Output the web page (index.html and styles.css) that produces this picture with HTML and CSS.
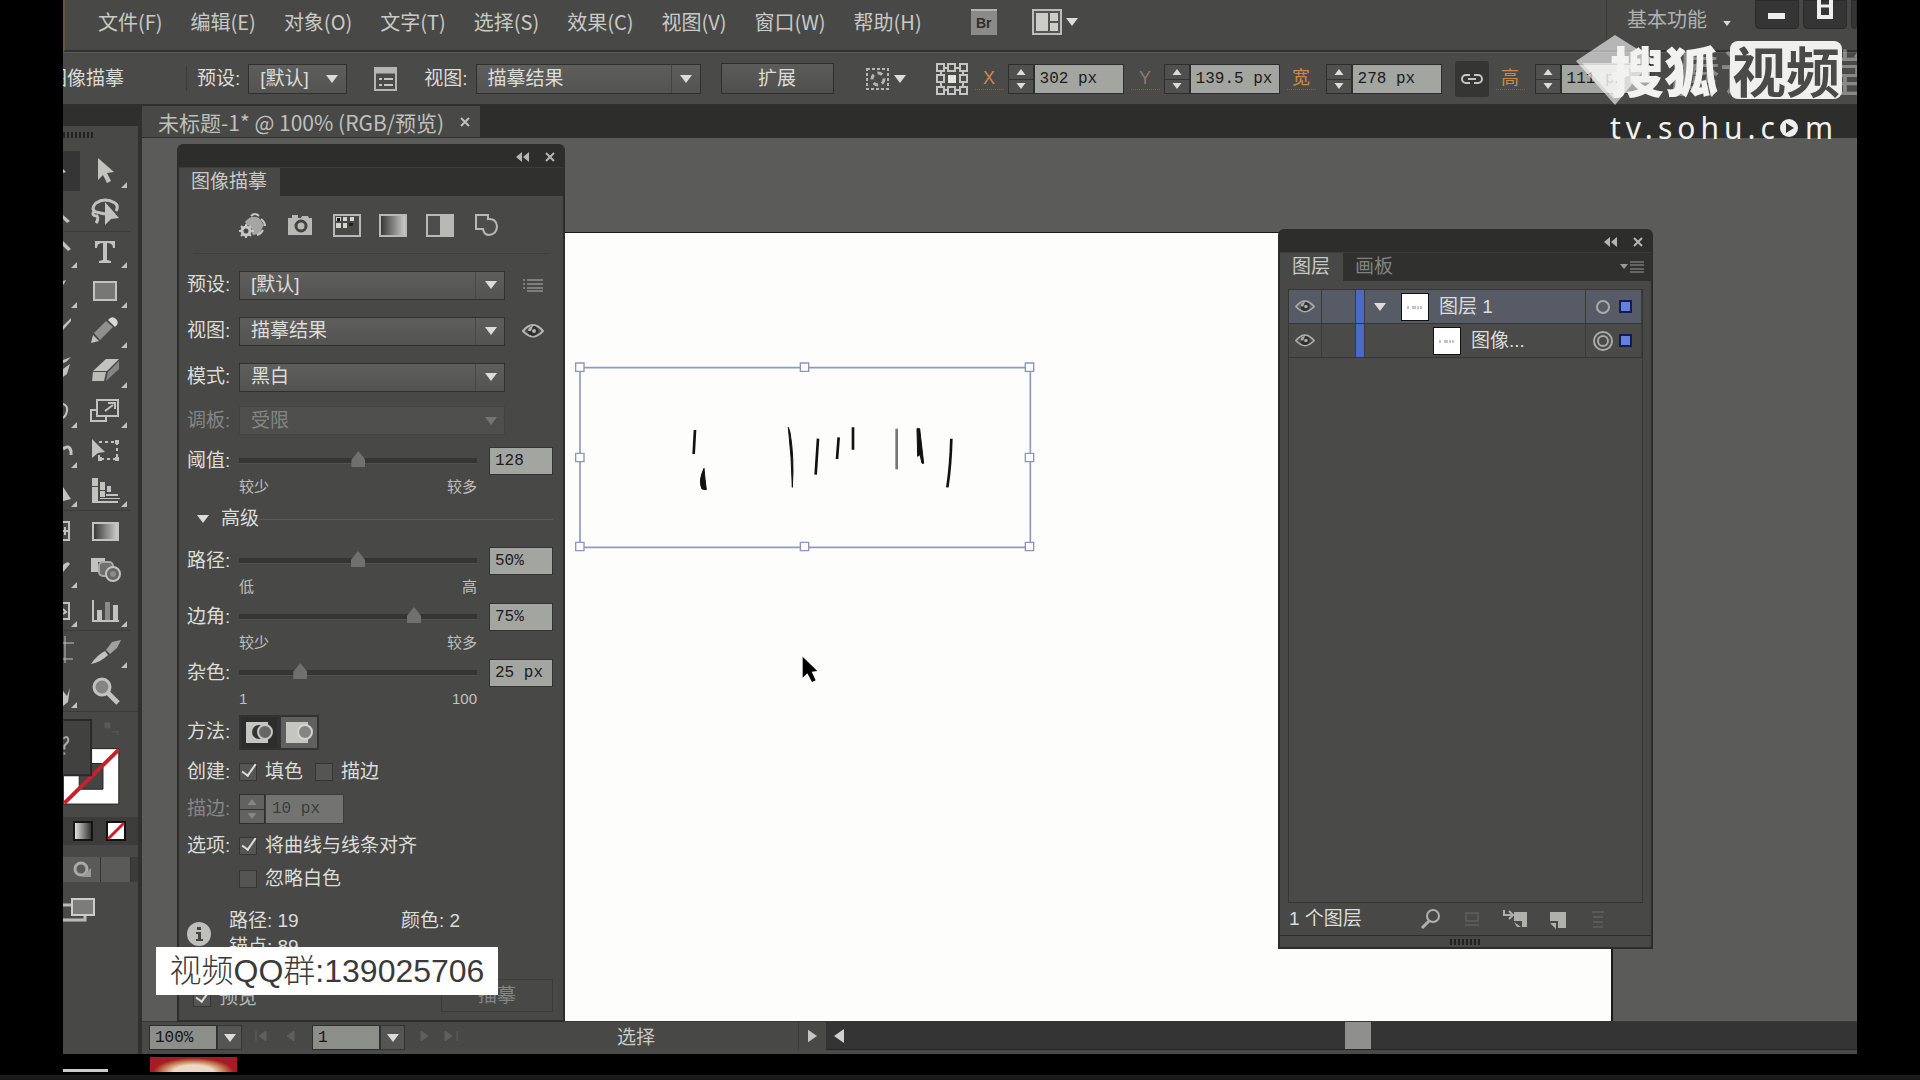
FILE: index.html
```html
<!DOCTYPE html>
<html lang="zh-CN">
<head>
<meta charset="utf-8">
<title>未标题-1* @ 100% (RGB/预览)</title>
<link rel="stylesheet" href="styles.css">
</head>
<body>
<svg class="defs" aria-hidden="true">
  <defs>
    <linearGradient id="ramp"><stop offset="0" stop-color="#333"/><stop offset="1" stop-color="#d0d0cc"/></linearGradient>
    <symbol id="down" viewBox="0 0 12 8"><path d="M0 0h12L6 8z"/></symbol>
    <symbol id="up" viewBox="0 0 12 8"><path d="M0 8h12L6 0z"/></symbol>
    <symbol id="right" viewBox="0 0 10 14"><path d="M0 0v14l10-7z"/></symbol>
    <symbol id="left" viewBox="0 0 10 14"><path d="M10 0v14L0 7z"/></symbol>
    <symbol id="corner" viewBox="0 0 6 6"><path d="M6 0v6H0z"/></symbol>
    <symbol id="collapse" viewBox="0 0 14 10"><path d="M6 0v10L0 5zM13 0v10L7 5z"/></symbol>
    <symbol id="close" viewBox="0 0 10 10"><path d="M1 1l8 8M9 1L1 9" fill="none" stroke="currentColor" stroke-width="2"/></symbol>
    <symbol id="eye" viewBox="0 0 22 16"><path d="M1 8Q11-4 21 8Q11 19 1 8z" fill="none" stroke="currentColor" stroke-width="2"/><circle cx="11" cy="8" r="5" fill="#2f302f"/><path d="M11 3a5 5 0 0 0-5 5h3z"/><circle cx="12" cy="8" r="2"/></symbol>
    <symbol id="sketch" viewBox="0 0 26 26"><path d="M6 12v3M11 12v3M13 12v3M16 12v3M19 12v3" stroke="#888" fill="none"/></symbol>
  </defs>
</svg>

<div class="app">
  <header class="menubar">
    <nav class="menus">
      <button>文件(F)</button><button>编辑(E)</button><button>对象(O)</button><button>文字(T)</button><button>选择(S)</button><button>效果(C)</button><button>视图(V)</button><button>窗口(W)</button><button>帮助(H)</button>
    </nav>
    <button class="bridge" aria-label="Bridge">Br</button>
    <button class="arrange" aria-label="排列文档">
      <svg width="30" height="26" viewBox="0 0 30 26"><rect x="1" y="1" width="28" height="24" fill="#555" stroke="#bcbdb9" stroke-width="2"/><path d="M4 4h12v18H4zM18 4h8v8h-8zM18 14h8v8h-8z" fill="#ccccc8"/></svg>
      <svg class="tri"><use href="#down"/></svg>
    </button>
    <button class="preset-space">基本功能 <svg class="tri tri-small"><use href="#down"/></svg></button>
    <div class="winbtns">
      <button aria-label="最小化"><svg width="20" height="8"><rect x="1" y="1" width="17" height="6" fill="#eee"/></svg></button>
      <button aria-label="还原"><svg width="18" height="20"><path d="M3 0v17h12V0" fill="none" stroke="#eee" stroke-width="4"/><path d="M4 6h10" stroke="#eee" stroke-width="3"/></svg></button>
      <button aria-label="关闭"></button>
    </div>
  </header>

  <div class="optbar">
    <span class="opt-title">图像描摹</span>
    <div class="opt-group">
      <label for="o-preset">预设:</label>
      <span class="pick pick-s"><select id="o-preset"><option>[默认]</option></select><svg class="tri"><use href="#down"/></svg></span>
    </div>
    <button class="plain" aria-label="图像描摹面板"><svg width="23" height="24" viewBox="0 0 23 24"><path d="M1 1h21v22H1z" fill="none" stroke="#b5b6b2" stroke-width="2"/><path d="M1 4h21" stroke="#b5b6b2" stroke-width="5"/><path d="M5 12h3M10 12h9M5 18h3M10 18h9" stroke="#c5c6c2" stroke-width="2"/></svg></button>
    <div class="opt-group">
      <label for="o-view">视图:</label>
      <span class="pick pick-l"><select id="o-view"><option>描摹结果</option></select><svg class="tri"><use href="#down"/></svg></span>
    </div>
    <button class="expand">扩展</button>
    <button class="plain isolate" aria-label="隔离选定的对象"><svg width="24" height="24" viewBox="0 0 24 24"><rect x="1" y="2" width="21" height="20" fill="none" stroke="#b5b6b2" stroke-width="2" stroke-dasharray="3 2"/><circle cx="12" cy="12" r="6" fill="none" stroke="#b5b6b2" stroke-width="3" stroke-dasharray="5 4"/></svg><svg class="tri"><use href="#down"/></svg></button>
    <button class="plain" aria-label="参考点"><svg width="32" height="32" viewBox="0 0 32 32"><g fill="none" stroke="#c5c6c2" stroke-width="2"><path d="M8 5h4M20 5h4M8 27h4M20 27h4M5 8v4M5 20v4M27 8v4M27 20v4"/><path d="M1 1h7v7H1zM12 1h7v7h-7zM24 1h7v7h-7zM1 12h7v7H1zM24 12h7v7h-7zM1 24h7v7H1zM12 24h7v7h-7zM24 24h7v7h-7z"/></g><path d="M12 12h8v8h-8z" fill="#e5e5e0"/></svg></button>
    <div class="measure"><label for="m-x">X</label><span class="spin"><button aria-label="增加"><svg><use href="#up"/></svg></button><button aria-label="减少"><svg><use href="#down"/></svg></button></span><input id="m-x" value="302 px"></div>
    <div class="measure"><label for="m-y" class="dim">Y</label><span class="spin"><button aria-label="增加"><svg><use href="#up"/></svg></button><button aria-label="减少"><svg><use href="#down"/></svg></button></span><input id="m-y" value="139.5 px"></div>
    <div class="measure size"><label for="m-w">宽</label><span class="spin"><button aria-label="增加"><svg><use href="#up"/></svg></button><button aria-label="减少"><svg><use href="#down"/></svg></button></span><input id="m-w" value="278 px"></div>
    <button class="chain" aria-label="约束宽度和高度比例"><svg width="24" height="14" viewBox="0 0 24 14"><path d="M10 3H6a4 4 0 0 0 0 8h4M14 3h4a4 4 0 0 1 0 8h-4M8 7h8" fill="none" stroke="#c5c6c2" stroke-width="2"/></svg></button>
    <div class="measure size"><label for="m-h">高</label><span class="spin"><button aria-label="增加"><svg><use href="#up"/></svg></button><button aria-label="减少"><svg><use href="#down"/></svg></button></span><input id="m-h" value="111 px"></div>
  </div>

  <div class="work">
    <aside class="tools">
      <div class="grip"></div>
      <div class="toolgrid">
        <button class="on"><svg viewBox="0 0 17 40"><path d="M0 18l3 3-3 1z"/></svg></button>
        <button><svg viewBox="0 0 50 40"><path d="M18 7v22l5-5 4 8 4-2-4-8 7-1z"/></svg><svg class="corner"><use href="#corner"/></svg></button>
        <button><svg viewBox="0 0 17 40"><path d="M0 24l7 6-3 2-4-4z"/></svg></button>
        <button><svg viewBox="0 0 50 40"><path d="M36 20q3-5-1-8-10-6-19 0-6 6 0 9l9 2M14 20q-3 5 3 5 2 3-1 7" fill="none" stroke="currentColor" stroke-width="3"/><path d="M25 11l14 16-8 1-6 6z"/></svg></button>
        <button class="cut"><svg viewBox="0 0 17 40"><path d="M0 9l8 8-3 2-5-5z"/></svg><svg class="corner"><use href="#corner"/></svg></button>
        <button class="cut"><svg viewBox="0 0 50 40"><path d="M15 9h20v7h-2q0-5-6-5v17l4 1v2H19v-2l4-1V11q-6 0-6 5h-2z"/></svg><svg class="corner"><use href="#corner"/></svg></button>
        <button><svg viewBox="0 0 17 40"><path d="M0 10l3-1-2 4-1 1z"/></svg><svg class="corner"><use href="#corner"/></svg></button>
        <button><svg viewBox="0 0 50 40"><rect x="14" y="11" width="22" height="18" fill="#777876" stroke="currentColor" stroke-width="2"/></svg><svg class="corner"><use href="#corner"/></svg></button>
        <button><svg viewBox="0 0 17 40"><path d="M0 15l8-8v3l-8 9z"/></svg></button>
        <button><svg viewBox="0 0 50 40"><path d="M11 32l2-8 6 6z"/><path d="M14 22l12-12 7 6-13 13z" fill="#90918e"/><path d="M28 9q4-5 8-1t-1 8z" fill="#d8d8d4"/></svg><svg class="corner"><use href="#corner"/></svg></button>
        <button><svg viewBox="0 0 17 40"><path d="M0 9l8-3-5 5-3 1zM0 18l7-5-3 10-4 3z"/></svg></button>
        <button><svg viewBox="0 0 50 40"><path d="M13 20L26 8h13L27 20z"/><path d="M13 21h13l-2 9H12z" fill="#bbbcb8"/><path d="M28 21L39 10v8L26 30z" fill="#858683"/></svg><svg class="corner"><use href="#corner"/></svg></button>
        <button><svg viewBox="0 0 17 40"><path d="M0 13q5 2 4 7t-4 7" fill="none" stroke="currentColor" stroke-width="2"/></svg><svg class="corner"><use href="#corner"/></svg></button>
        <button><svg viewBox="0 0 50 40"><path d="M17 9h21v16H17zM17 19h-6v11h15v-5" fill="none" stroke="currentColor" stroke-width="2"/><path d="M25 20l8-6M28 12h7v6" fill="none" stroke="currentColor" stroke-width="2"/></svg><svg class="corner"><use href="#corner"/></svg></button>
        <button><svg viewBox="0 0 17 40"><path d="M0 18q6-5 8 2v4" fill="none" stroke="currentColor" stroke-width="3"/></svg><svg class="corner"><use href="#corner"/></svg></button>
        <button><svg viewBox="0 0 50 40"><path d="M12 8l13 13-7 1-6 5z"/><path d="M19 11h18v17H19v-5" fill="none" stroke="currentColor" stroke-width="2" stroke-dasharray="3 3"/><path d="M35 9h4v4h-4zM35 26h4v4h-4zM18 26h4v4h-4z"/></svg></button>
        <button class="cut-b"><svg viewBox="0 0 17 40"><path d="M0 16l8 12-8 2z"/></svg><svg class="corner"><use href="#corner"/></svg></button>
        <button class="cut-b"><svg viewBox="0 0 50 40"><path d="M12 7h6v8h-6zM12 16h6v14h-6zM20 11h5v8h-5zM20 20h5v6h-5zM27 15h4v6h-4zM20 27h20v1H20zM26 23h12v2H26zM12 30h26v2H12z"/></svg><svg class="corner"><use href="#corner"/></svg></button>
        <button><svg viewBox="0 0 17 40"><path d="M0 11h6v18H0M0 20h5M2 16v8" fill="none" stroke="currentColor" stroke-width="2"/></svg></button>
        <button><svg viewBox="0 0 50 40"><rect x="13" y="12" width="25" height="17" fill="url(#ramp)" stroke="currentColor" stroke-width="2"/></svg></button>
        <button><svg viewBox="0 0 17 40"><path d="M0 14q5-5 7-1l-7 8z"/></svg><svg class="corner"><use href="#corner"/></svg></button>
        <button><svg viewBox="0 0 50 40"><path d="M11 7h14v4h-7v10h-7z"/><rect x="19" y="11" width="14" height="14" rx="4" fill="#70716f" stroke="#aaa" stroke-width="2"/><circle cx="33" cy="23" r="7" fill="#666765" stroke="currentColor" stroke-width="2"/><circle cx="33" cy="23" r="3" fill="#8b8c89"/></svg></button>
        <button class="cut-b"><svg viewBox="0 0 17 40"><path d="M0 12h6v16H0M0 18l3 3-3 2" fill="none" stroke="currentColor" stroke-width="2"/></svg><svg class="corner"><use href="#corner"/></svg></button>
        <button class="cut-b"><svg viewBox="0 0 50 40"><path d="M12 9h2v20h25v2H12z"/><path d="M17 19h5v10h-5zM33 14h5v15h-5z"/><path d="M25 11h5v18h-5z" fill="#8b8c89"/></svg><svg class="corner"><use href="#corner"/></svg></button>
        <button><svg viewBox="0 0 17 40"><path d="M2 5v27M0 12h11M0 28h10" fill="none" stroke="currentColor" stroke-width="1"/></svg></button>
        <button><svg viewBox="0 0 50 40"><path d="M11 33q6-9 14-13l3 4q-7 7-17 9z"/><path d="M26 19l6-8 9-2-4 8-7 6z" fill="#a0a19e"/></svg><svg class="corner"><use href="#corner"/></svg></button>
        <button><svg viewBox="0 0 17 40"><path d="M0 20l4 5 3-8-2 14-5 4z"/></svg><svg class="corner"><use href="#corner"/></svg></button>
        <button><svg viewBox="0 0 50 40"><circle cx="22" cy="16" r="8" fill="#858683" stroke="currentColor" stroke-width="3"/><path d="M28 22l10 10" stroke="currentColor" stroke-width="5"/></svg></button>
      </div>
      <svg class="swatches" width="75" height="100" viewBox="0 0 75 100">
        <path d="M0 37h56v56H0z" fill="#fff" stroke="#222"/><path d="M16 52h24v26H16z" fill="#444543" stroke="#222"/><path d="M1 92L56 38" stroke="#c8202c" stroke-width="4"/><path d="M-2 8h30v56H-2z" fill="#41423f" stroke="#2a2b29" stroke-width="2"/><path d="M0 27q4-4 5 1 0 3-4 6v4M0 42h2" fill="none" stroke="#aaa" stroke-width="2"/><path d="M42 11h5v5h-5zM49 20h7M55 20v3" fill="#5a5b59" stroke="#5a5b59"/>
      </svg>
      <div class="modes"><button aria-label="渐变"><i class="m-grad"></i></button><button aria-label="无"><svg width="20" height="20"><path d="M1 1h18v18H1z" fill="#fff" stroke="#111" stroke-width="2"/><path d="M2 18L18 2" stroke="#c8202c" stroke-width="3"/></svg></button></div>
      <div class="modes draw"><button aria-label="背面绘图"><svg width="22" height="20"><circle cx="9" cy="9" r="6" fill="none" stroke="#aaa" stroke-width="3"/><path d="M10 17h9V8z" fill="#999"/></svg></button><button aria-label="内部绘图"></button></div>
      <button class="screen" aria-label="更改屏幕模式"><svg width="34" height="28"><path d="M0 9h8M0 24h22v-5" fill="none" stroke="#bbb" stroke-width="3"/><path d="M9 3h22v16H9z" fill="#7c7d7b" stroke="#ccc" stroke-width="2"/></svg></button>
    </aside>

    <main class="doc">
      <div class="tabs"><div class="tab"><span>未标题-1* @ 100% (RGB/预览)</span><button aria-label="关闭文档"><svg width="10" height="10"><use href="#close"/></svg></button></div></div>
      <div class="canvas">
        <div class="artboard"></div>
        <svg class="art" width="500" height="360" viewBox="0 0 1500 1080">
          <path d="M60 53H1411V592H60z" fill="none" stroke="#8f9ac4" stroke-width="5"/>
          <g fill="#fff" stroke="#8f93c0" stroke-width="4"><path d="M47 39h25v25H47zM721 39h25v25h-25zM1396 39h25v25h-25zM47 310h25v25H47zM1396 310h25v25h-25zM47 577h25v25H47zM721 577h25v25h-25zM1396 577h25v25h-25z"/></g>
          <path d="M405 240L401 312M774 266L767 374M836 262L831 327M879 232V299" stroke="#111" stroke-width="8" fill="none"/>
          <path d="M432 355q-18 38-6 62l13 2q-4-30-7-64zM685 232q10 90 12 180 6-90-7-165zM1071 236l8 0 12 104-5 0-6-26-7 5z" fill="#111" stroke="#111" stroke-width="3"/>
          <path d="M1174 266q-2 80-12 146" stroke="#111" stroke-width="8" fill="none"/>
          <path d="M1010 236V358" stroke="#777" stroke-width="8"/>
          <path d="M728 920V983l14-13 14 26 11-5-12-26 17-2z" fill="#000"/>
        </svg>

        <section class="panel trace">
          <header class="p-head"><button aria-label="折叠"><svg width="14" height="10"><use href="#collapse"/></svg></button><button aria-label="关闭"><svg width="10" height="10"><use href="#close"/></svg></button></header>
          <div class="p-tabs"><span class="p-tab">图像描摹</span></div>
          <div class="quick">
            <button aria-label="自动着色"><svg viewBox="0 0 28 26"><path d="M6 10q6-8 14-4l5 7-5 9-6 1z" fill="#a5a6a2"/><path d="M12 4q4-4 8 0M22 7q4 3 4 7M24 18q-2 4-6 5" fill="none" stroke="#c5c6c2" stroke-width="2"/><circle cx="7" cy="19" r="6" fill="#484947"/><circle cx="7" cy="19" r="4" fill="none" stroke="#c8c9c5" stroke-width="3"/><path d="M7 12v3M7 23v3M0 19h3M11 19h4M2 14l2 2M12 24l-2-2M12 14l-2 2M2 24l2-2" stroke="#c8c9c5" stroke-width="2"/></svg></button>
            <button aria-label="高色"><svg viewBox="0 0 28 26"><path d="M2 6h4V3h6v3h3l1-2h6l1 2h3v17H2z"/><circle cx="15" cy="14" r="5" fill="none" stroke="#444" stroke-width="3"/></svg></button>
            <button aria-label="低色"><svg viewBox="0 0 28 26"><path d="M1 3h26v21H1z" fill="none" stroke="currentColor" stroke-width="2"/><path d="M3 5h5v4H3zM10 5h4v4h-4zM17 5h4v4h-4zM3 11h5v5H3zM10 11h4v5h-4z" fill="#d5d5d0"/><path d="M4 6h3v3H4z" fill="#111"/><path d="M16 11h4v3h-4z" fill="#222"/></svg></button>
            <button aria-label="灰度"><svg viewBox="0 0 28 26"><path d="M1 3h26v21H1z" fill="url(#ramp)" stroke="currentColor" stroke-width="2"/></svg></button>
            <button aria-label="黑白"><svg viewBox="0 0 28 26"><path d="M1 3h26v21H1z" fill="#4d4e4c" stroke="currentColor" stroke-width="2"/><path d="M14 3h12v21H14z"/></svg></button>
            <button aria-label="轮廓"><svg viewBox="0 0 28 26"><path d="M3 3h12v4q8-1 9 7 0 8-8 9-5 0-6-6H3z" fill="#4d4e4c" stroke="currentColor" stroke-width="2"/></svg></button>
          </div>
          <div class="p-body">
            <div class="row"><label for="t-preset">预设:</label><span class="pick"><select id="t-preset"><option>[默认]</option></select><svg class="tri"><use href="#down"/></svg></span><button class="side" aria-label="管理预设"><svg width="20" height="14"><path d="M0 2h2M4 2h16M0 6h2M4 6h16M0 10h2M4 10h16M4 13h16" stroke="currentColor" stroke-width="1"/></svg></button></div>
            <div class="row"><label for="t-view">视图:</label><span class="pick"><select id="t-view"><option>描摹结果</option></select><svg class="tri"><use href="#down"/></svg></span><button class="side" aria-label="查看源图像"><svg width="22" height="16"><use href="#eye"/></svg></button></div>
            <div class="row"><label for="t-mode">模式:</label><span class="pick"><select id="t-mode"><option>黑白</option></select><svg class="tri"><use href="#down"/></svg></span></div>
            <div class="row low off"><label for="t-pal">调板:</label><span class="pick"><select id="t-pal" disabled><option>受限</option></select><svg class="tri"><use href="#down"/></svg></span></div>
            <div class="slide"><label for="s-th">阈值:</label><input type="range" id="s-th" min="0" max="255" value="128"><input class="num" value="128" aria-label="阈值"><div class="ends"><span>较少</span><span>较多</span></div></div>
            <button class="adv"><svg class="tri"><use href="#down"/></svg><span>高级</span></button>
            <div class="slide"><label for="s-pa">路径:</label><input type="range" id="s-pa" value="50"><input class="num" value="50%" aria-label="路径"><div class="ends"><span>低</span><span>高</span></div></div>
            <div class="slide"><label for="s-co">边角:</label><input type="range" id="s-co" value="75"><input class="num" value="75%" aria-label="边角"><div class="ends"><span>较少</span><span>较多</span></div></div>
            <div class="slide"><label for="s-no">杂色:</label><input type="range" id="s-no" min="1" max="100" value="25"><input class="num" value="25 px" aria-label="杂色"><div class="ends"><span>1</span><span>100</span></div></div>
            <div class="row"><span>方法:</span><div class="method"><button class="sel" aria-label="邻接"><svg width="28" height="24"><path d="M1 2h22v21H1z" fill="#c5c6c2"/><circle cx="14" cy="12" r="7" fill="#333"/><circle cx="20" cy="12" r="7" fill="#666" stroke="#c5c6c2" stroke-width="2"/></svg></button><button aria-label="重叠"><svg width="28" height="24"><path d="M1 2h22v21H1z" fill="#c5c6c2"/><circle cx="20" cy="12" r="7" fill="#858683" stroke="#d5d5d0" stroke-width="2"/></svg></button></div></div>
            <div class="row short"><span>创建:</span><div class="checks"><label><input type="checkbox" checked>填色</label><label><input type="checkbox">描边</label></div></div>
            <div class="row low off"><label for="t-st">描边:</label><div class="stroke"><span class="spin"><button disabled aria-label="增加"><svg><use href="#up"/></svg></button><button disabled aria-label="减少"><svg><use href="#down"/></svg></button></span><input id="t-st" value="10 px" disabled></div></div>
            <div class="row short"><span>选项:</span><div class="checks"><label><input type="checkbox" checked>将曲线与线条对齐</label></div></div>
            <div class="row short"><span></span><div class="checks"><label><input type="checkbox">忽略白色</label></div></div>
            <div class="info"><svg width="24" height="24"><circle cx="12" cy="12" r="12" fill="#bfc0bc"/><path d="M10 5h4v3h-4zM9 10h5v7h2v2H9v-2h2v-5H9z" fill="#444"/></svg>
              <div class="stats"><span>路径: 19</span><span>颜色: 2</span><span>锚点: 89</span></div></div>
            <div class="p-foot"><label><input type="checkbox" checked>预览</label><button class="go" disabled>描摹</button></div>
          </div>
        </section>

        <section class="panel layers">
          <header class="p-head"><button aria-label="折叠"><svg width="14" height="10"><use href="#collapse"/></svg></button><button aria-label="关闭"><svg width="10" height="10"><use href="#close"/></svg></button></header>
          <div class="p-tabs"><span class="p-tab">图层</span><span class="p-tab idle">画板</span><button class="p-menu" aria-label="面板菜单"><svg width="24" height="14"><path d="M0 4h8l-4 5z"/><path d="M10 2h14M10 5h14M10 9h14M10 12h14" stroke="currentColor" stroke-width="1"/></svg></button></div>
          <ul class="list">
            <li class="current"><button class="vis" aria-label="切换可视性"><svg width="20" height="15"><use href="#eye"/></svg></button><i class="lock"></i><i class="bar"></i><div class="name"><svg class="tri"><use href="#down"/></svg><svg class="thumb" width="28" height="28"><use href="#sketch"/></svg><span>图层 1</span></div><div class="target"><svg width="20" height="20"><circle cx="10" cy="10" r="6" fill="none" stroke="#aaa" stroke-width="2"/></svg><i class="art-sel"></i></div></li>
            <li><button class="vis" aria-label="切换可视性"><svg width="20" height="15"><use href="#eye"/></svg></button><i class="lock"></i><i class="bar"></i><div class="name child"><svg class="thumb" width="28" height="28"><use href="#sketch"/></svg><span>图像...</span></div><div class="target"><svg width="20" height="20"><circle cx="10" cy="10" r="9" fill="none" stroke="#aaa" stroke-width="2"/><circle cx="10" cy="10" r="5" fill="none" stroke="#aaa" stroke-width="2"/></svg><i class="art-sel"></i></div></li>
          </ul>
          <footer class="l-foot"><span>1 个图层</span>
            <div class="l-tools">
            <button aria-label="定位对象"><svg width="22" height="22"><circle cx="13" cy="8" r="6" fill="none" stroke="currentColor" stroke-width="2"/><path d="M9 13l-7 7" stroke="currentColor" stroke-width="3"/></svg></button>
            <button class="faint" aria-label="剪切蒙版"><svg width="22" height="22"><path d="M5 5h12v8H5zM4 17h14" fill="none" stroke="currentColor" stroke-width="2"/></svg></button>
            <button aria-label="新建子图层"><svg width="26" height="22"><path d="M2 2v5h7M7 3l4 4-4 4" fill="none" stroke="currentColor" stroke-width="2"/><path d="M12 4h13v15h-5v-6h-8zM12 14l7 5h-4z"/></svg></button>
            <button aria-label="新建图层"><svg width="22" height="22"><path d="M3 4h16v16h-8v-7H3zM3 15h6v6z"/></svg></button>
            <button class="faint" aria-label="删除"><svg width="22" height="22"><path d="M4 4h12M5 9h10M5 14h10M5 19h10" stroke="currentColor" stroke-width="2"/></svg></button>
            </div>
          </footer>
          <div class="l-grip"></div>
        </section>
      </div>

      <div class="status">
        <div class="combo"><input value="100%" aria-label="缩放"><button aria-label="缩放级别"><svg class="tri"><use href="#down"/></svg></button></div>
        <div class="step"><svg width="44" height="14" viewBox="0 0 44 14"><path d="M2 2v10M12 2L5 7l7 5zM40 2l-7 5 7 5z" stroke="currentColor"/></svg></div>
        <div class="combo"><input value="1" aria-label="画板"><button aria-label="画板导航"><svg class="tri"><use href="#down"/></svg></button></div>
        <div class="step"><svg width="44" height="14" viewBox="0 0 44 14"><path d="M4 2l7 5-7 5zM28 2l7 5-7 5zM40 2v10" stroke="currentColor"/></svg></div>
        <span class="tool-name">选择</span>
        <button class="more" aria-label="状态菜单"><svg width="9" height="14"><use href="#right"/></svg></button>
        <div class="scroll"><svg width="10" height="14"><use href="#left"/></svg><i class="s-thumb"></i></div>
      </div>
    </main>
  </div>
</div>
<div class="taskbar"><i class="line"></i><i class="task-icon"></i></div>

<div class="group-note">视频QQ群:139025706</div>
<div class="ghost">腾讯课堂</div>
<div class="sohu"><svg class="gem" width="78" height="70" viewBox="0 0 78 70"><path d="M0 26L39 0l38 24-38 46z" fill="#fff" fill-opacity=".6"/><path d="M6 28h50L38 64z" fill="#fff" fill-opacity=".5"/></svg>
  <div class="brand"><span>搜狐</span><span class="plate">视频</span></div>
  <div class="url"><span>tv.sohu.c</span><svg width="18" height="18" viewBox="0 0 18 18"><circle cx="9" cy="9" r="9" fill="#eee"/><path d="M6 4v10l8-5z" fill="#333"/></svg><span>m</span></div>
</div>
</body>
</html>
```
FILE: styles.css
```css
* { box-sizing: border-box; }
body {
  margin: 0; background: #000; min-height: 100vh; display: flex; flex-direction: column;
  font-family: "Liberation Sans", "Noto Sans CJK SC", sans-serif; font-size: 19px; line-height: 24px; color: #dcddd9;
  position: relative; overflow: hidden;
}
button, input, select { font: inherit; color: inherit; margin: 0; padding: 0; border: 0; background: none; border-radius: 0; }
button { display: flex; align-items: center; justify-content: center; }
svg { fill: currentColor; flex: none; display: block; }
label, span, button { white-space: nowrap; }
ul { list-style: none; margin: 0; padding: 0; }
i { display: block; }
.defs { position: absolute; width: 0; height: 0; }
.tri { width: 12px; height: 8px; color: #dcdcd8; }
.tri-small { width: 8px; height: 5px; }

.app { flex: 1; margin: 0 63px; display: flex; flex-direction: column; background: #4a4b49; overflow: hidden; position: relative; }

.menubar { height: 52px; display: flex; align-items: flex-start; background: #484947; border-bottom: 2px solid #2f302f; font-family: "Noto Sans CJK SC", sans-serif; font-size: 20px; color: #c9cac6; border-left: 2px solid #6b5638; }
.menus { display: flex; gap: 28px; padding: 10px 0 0 33px; margin-right: 24px; }
.bridge { margin: 9px 0 0 25px; width: 26px; height: 26px; background: #8a8b88; color: #2d2e2d; font: bold 14px/26px "Liberation Sans", sans-serif; border-top: 2px solid #b5b6b2; }
.arrange { margin: 9px 0 0 35px; gap: 4px; }
.preset-space { margin: 0 0 0 auto; padding: 7px 0 0 20px; gap: 16px; color: #b0b1ad; border-left: 1px solid #3a3b39; height: 40px; align-items: flex-start; }
.preset-space svg { align-self: center; }
.winbtns { display: flex; gap: 4px; margin-left: 24px; }
.winbtns button { width: 44px; height: 29px; background: #343534; border: 1px solid #2a2b2a; border-radius: 0 0 4px 4px; align-items: flex-end; padding-bottom: 8px; }
.winbtns button:last-child { width: 6px; }

.optbar { height: 54px; display: flex; align-items: center; border-top: 1px solid #595a58; border-bottom: 2px solid #30312f; overflow: hidden; }
.opt-title { margin-left: -15px; padding-right: 62px; border-right: 1px solid #3a3b39; }
.opt-group { display: flex; align-items: center; gap: 8px; margin: 0 27px 0 10px; }
.plain { gap: 4px; color: #b5b6b2; }
.plain + .opt-group { margin: 0 20px 0 27px; }
.pick { display: flex; align-items: center; position: relative; height: 30px; border: 1px solid #30312f; background: linear-gradient(#5e5f5d, #535452); }
.pick select { appearance: none; width: 100%; height: 100%; padding: 0 34px 0 11px; }
.pick .tri { position: absolute; right: 8px; pointer-events: none; }
.pick-s { width: 99px; }
.pick-s select { padding-right: 20px; }
.pick-l { width: 225px; }
.pick-l::after { content: ""; position: absolute; right: 28px; height: 100%; border-left: 1px solid #444; }
.expand { width: 113px; height: 31px; border: 1px solid #2d2e2d; background: linear-gradient(#5b5c5a, #4f504e); margin-right: 32px; }
.isolate { margin-right: 30px; }
.measure { display: flex; align-items: center; margin-left: 7px; height: 30px; }
.measure label { width: 29px; text-align: center; color: #c98a4a; border-bottom: 1px dotted #8a6038; font-size: 18px; line-height: 22px; margin-right: 4px; }
.measure .dim { color: #8d7c70; }
.size label { margin-right: 10px; }
.spin { width: 26px; height: 30px; display: grid; grid-template-rows: 1fr 1fr; border: 1px solid #2d2e2d; background: #50514f; }
.spin button + button { border-top: 1px solid #333; }
.spin svg { width: 10px; height: 6px; }
.measure input { width: 90px; height: 30px; background: #a3a5a1; color: #1c1c1c; border: 1px solid #2d2e2d; padding-left: 5px; font: 16px/28px "Liberation Mono", monospace; }
.chain { width: 34px; height: 36px; margin-left: 13px; background: #353634; border-radius: 3px; }

.work { flex: 1; display: grid; grid-template-columns: 79px minmax(0, 1fr); }
.tools { border-top: 20px solid #2f302e; border-right: 4px solid #30312f; background: #484947; color: #c2c3bf; }
.grip { height: 6px; width: 32px; margin: 6px 0 13px; background: repeating-linear-gradient(90deg, #222 0 2px, #484947 2px 4px); }
.toolgrid { display: grid; grid-template-columns: 17px 50px; grid-auto-rows: 40px; }
.toolgrid button { position: relative; }
.toolgrid .on { background: #343534; }
.toolgrid .cut { border-top: 1px solid #3b3c3a; }
.toolgrid .cut-b { border-bottom: 1px solid #3b3c3a; }
.toolgrid svg { width: 100%; height: 40px; }
.toolgrid .corner { position: absolute; right: 3px; bottom: 3px; width: 6px; height: 6px; }
.swatches { border-top: 1px solid #3b3c3a; }
.modes { display: grid; grid-template-columns: 38px 30px; height: 28px; margin: 6px 0 12px; background: #3c3d3b; }
.m-grad { width: 20px; height: 20px; border: 2px solid #151515; background: linear-gradient(90deg, #e0e0e0, #333); }
.modes button:first-child { padding-left: 2px; }
.draw { height: 25px; margin-bottom: 14px; }
.draw button { background: #5a5b59; border-right: 1px solid #333; }

.doc { display: flex; flex-direction: column; min-width: 0; }
.tabs { height: 32px; background: #2d2e2c; display: flex; font-family: "Noto Sans CJK SC", sans-serif; font-size: 21px; border-bottom: 1px solid #2d2e2c; }
.tab { width: 338px; background: #484947; padding: 0 10px 0 16px; display: flex; justify-content: space-between; align-items: center; color: #bfc0bc; }
.canvas { flex: 1; background: #5b5c5a; position: relative; }
.artboard { position: absolute; left: 300px; right: 244px; top: 94px; bottom: 0; background: #fdfefc; border: solid #1a1a1a; border-width: 1px 2px 0 1px; }
.art { position: absolute; left: 418px; top: 212px; }

.panel { position: absolute; background: #484947; border: 2px solid #2d2e2c; border-radius: 6px 6px 0 0; display: flex; flex-direction: column; }
.trace { left: 35px; top: 6px; width: 388px; }
.layers { right: 204px; top: 91px; width: 375px; }
.p-head { height: 21px; background: #2d2e2c; display: flex; justify-content: flex-end; align-items: center; gap: 15px; padding-right: 8px; color: #b5b6b2; }
.p-tabs { height: 29px; background: #30312f; display: flex; align-items: stretch; border-top: 1px solid #3b3c3a; }
.p-tab { background: #484947; padding: 2px 13px 0 12px; color: #c9cac6; }
.p-tab.idle { background: none; color: #82837f; }
.p-menu { margin-left: auto; padding-right: 7px; color: #9a9b97; }
.quick { height: 58px; margin: 0 14px 8px; padding: 0 48px 0 46px; display: flex; justify-content: space-between; align-items: center; border-bottom: 1px solid #3e3f3d; color: #b8b9b5; }
.quick svg { width: 28px; height: 26px; }
.p-body { padding: 0 10px 8px 8px; }
.row { height: 46px; display: grid; grid-template-columns: 52px 266px 1fr; align-items: center; }
.row .pick { height: 29px; }
.row .pick::after { content: ""; position: absolute; right: 28px; height: 100%; border-left: 1px solid #484947; }
.row .pick .tri { right: 7px; }
.side { color: #b5b6b2; padding-left: 8px; }
.low { height: 41px; }
.short { height: 33px; }
.row .pick select:disabled { opacity: 1; }
.off { color: #858683; }
.off .tri { color: #757673; }
.off .pick { background: #4e4f4d; border-color: #434442; }
.off .pick::after { display: none; }
.slide { height: 56px; padding: 2px 0; display: grid; grid-template-columns: 52px 238px 62px; grid-template-rows: 36px 16px; align-items: center; column-gap: 0; }
.slide .num { width: 64px; height: 28px; margin-left: 12px; border: 1px solid #333; background: #a3a5a1; color: #1c1c1c; padding-left: 5px; font: 16px/26px "Liberation Mono", monospace; }
.ends { grid-column: 2; display: flex; justify-content: space-between; font-size: 15px; line-height: 16px; color: #c0c1bd; }
input[type=range] { appearance: none; width: 100%; height: 20px; }
input[type=range]::-webkit-slider-runnable-track { height: 6px; background: #343534; border-bottom: 1px solid #525351; }
input[type=range]::-webkit-slider-thumb { appearance: none; width: 14px; height: 16px; margin-top: -7px; background: #70716f; clip-path: polygon(50% 0, 100% 55%, 100% 100%, 0 100%, 0 55%); }
.adv { width: 100%; height: 44px; justify-content: flex-start; gap: 12px; padding-left: 10px; }
.adv::after { content: ""; flex: 1; border-top: 1px solid #5b5c5a; margin-left: -12px; }
.method { display: flex; }
.method button { width: 40px; height: 35px; background: #60615f; border: 2px solid #333; }
.method .sel { background: #2d2e2c; }
.checks { display: flex; gap: 12px; }
.checks label, .p-foot label { display: flex; align-items: center; gap: 8px; }
input[type=checkbox] { appearance: none; width: 18px; height: 18px; background: #555654; border: 1px solid #353634; position: relative; flex: none; }
input[type=checkbox]:checked::after { content: ""; position: absolute; left: 5px; top: -3px; width: 6px; height: 13px; border: solid #dcdcd8; border-width: 0 2px 2px 0; transform: rotate(35deg); }
.stroke { display: flex; }
.stroke input { width: 79px; height: 30px; border: 1px solid #3b3c3a; background: #737472; color: #3b3c3a; padding-left: 6px; font: 16px/28px "Liberation Mono", monospace; }
.stroke .spin { background: #626361; color: #868784; }
.info { display: flex; align-items: center; gap: 18px; padding-top: 12px; height: 66px; }
.stats { flex: 1; display: grid; grid-template-columns: 172px 1fr; line-height: 26px; }
.p-foot { display: flex; justify-content: space-between; align-items: flex-end; height: 51px; padding-left: 6px; }
.p-foot label { color: #b5b6b2; padding-bottom: 2px; }
.go { width: 112px; height: 33px; border: 1px solid #3b3c3a; color: #858683; }

.list { margin: 8px 8px 0; height: 614px; border: 1px solid #343534; background: #4a4b49; }
.list li { height: 34px; display: grid; grid-template-columns: 33px 34px 9px 1fr 56px; border-bottom: 1px solid #343534; }
.list li > * { border-right: 1px solid #3b3c3a; }
.list .current { background: #565b66; }
.vis { color: #aaaba7; }
.bar { background: #4a6ac8; }
.name { display: flex; align-items: center; gap: 10px; padding-left: 4px; overflow: hidden; }
.name .tri { margin: 0 5px; }
.name.child { padding-left: 68px; }
.thumb { background: #fff; border: 1px solid #111; }
.target { display: flex; align-items: center; gap: 6px; padding-left: 7px; }
.art-sel { width: 13px; height: 13px; background: #6380dc; border: 2px solid #131c50; }
.l-foot { height: 32px; display: flex; align-items: center; padding: 0 41px 0 9px; justify-content: space-between; }
.l-tools { display: flex; gap: 19px; color: #b0b1ad; }
.l-tools .faint { color: #5a5b59; }
.l-grip { height: 12px; border-top: 1px solid #2d2e2c; display: flex; justify-content: center; align-items: center; }
.l-grip::after { content: ""; width: 32px; height: 6px; background: repeating-linear-gradient(90deg, #222 0 2px, #484947 2px 4px); }

.status { height: 33px; display: flex; align-items: flex-start; border-top: 1px solid #383937; border-bottom: 5px solid #4a4b49; background: #484947; padding-left: 7px; }
.combo { display: flex; padding-top: 3px; }
.combo input { width: 68px; height: 25px; background: #8c8e8a; border: 1px solid #2d2e2d; color: #151515; padding-left: 5px; font: 16px/23px "Liberation Mono", monospace; }
.combo button { width: 25px; height: 25px; border: 1px solid #333; background: #555654; }
.step { width: 70px; padding: 7px 12px; color: #5f605e; }
.tool-name { margin-left: 142px; line-height: 32px; color: #c9cac6; }
.more { margin-left: auto; height: 28px; width: 28px; border-left: 1px solid #3b3c3a; color: #c5c6c2; }
.scroll { width: calc(100% - 677px); height: 28px; background: #333433; display: flex; align-items: center; padding-left: 8px; color: #d0d1cd; border-bottom: 1px solid #242524; }
.s-thumb { width: 26px; height: 27px; background: #8f908e; margin-left: 49%; }

.taskbar { height: 26px; padding: 2px 0 0 63px; border-bottom: 5px solid #1b1b1c; display: flex; align-items: flex-end; gap: 42px; }
.line { width: 45px; height: 3px; background: #ccc; margin-bottom: 3px; }
.task-icon { width: 87px; height: 15px; margin-bottom: 3px; background: radial-gradient(ellipse 40px 14px at 50% 100%, #ecd8c4 0 50%, #c07048 80%, #a81a26); }

.group-note { position: absolute; left: 156px; bottom: 85px; width: 342px; height: 48px; background: #fff; color: #3a3a3a; font: 300 32px/48px "Liberation Sans", "Noto Sans CJK SC", sans-serif; text-align: center; white-space: nowrap; }
.ghost { position: absolute; right: 63px; top: 42px; width: 187px; overflow: hidden; white-space: nowrap; font: 50px/56px "Noto Sans CJK SC", sans-serif; color: #fff; opacity: .35; }
.sohu { position: absolute; right: 78px; top: 41px; width: 232px; color: #f2f2f0; }
.gem { position: absolute; right: 188px; top: -6px; }
.brand { position: relative; display: flex; justify-content: space-between; font: 900 54px/58px "Noto Sans CJK SC", sans-serif; }
.plate { background: #f0f0ee; color: #4a4b49; border-radius: 8px; width: 112px; text-align: center; font-weight: 700; }
.url { display: flex; align-items: center; margin-top: 10px; font: 30px/38px "Noto Sans", sans-serif; letter-spacing: 5px; }
.url span:last-child { letter-spacing: 0; margin-left: 7px; }
```
